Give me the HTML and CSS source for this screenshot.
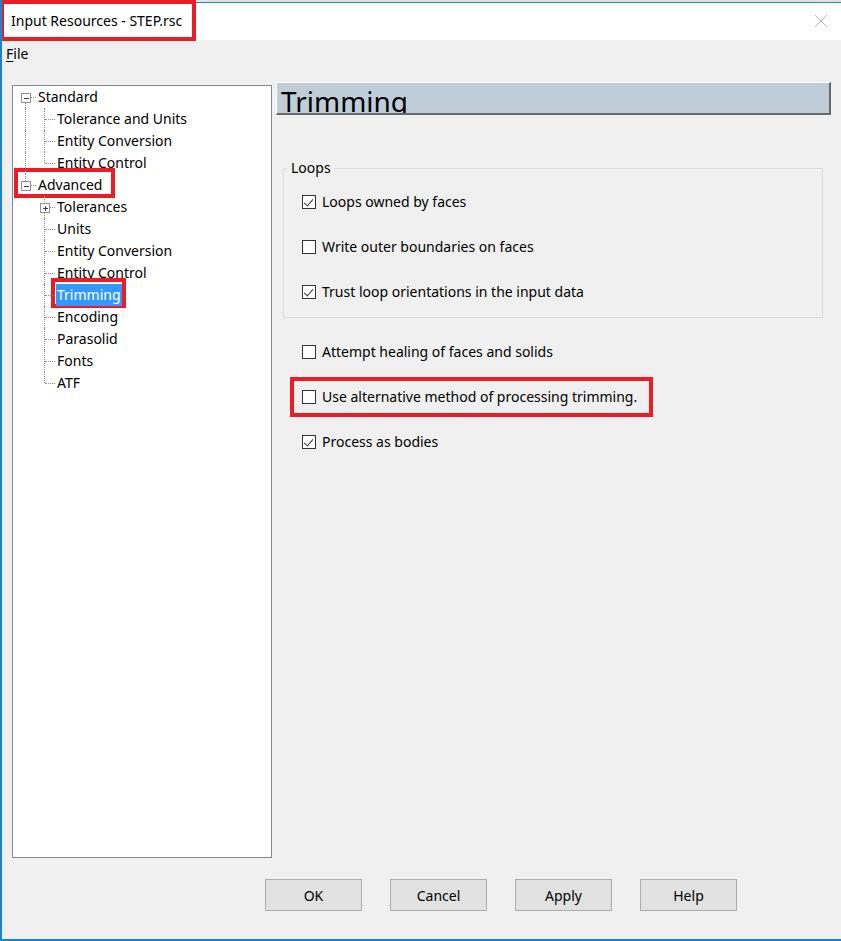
FILE: index.html
```html
<!DOCTYPE html>
<html>
<head>
<meta charset="utf-8">
<link rel="stylesheet" href="styles.css">
</head>
<body>
<div class="window">
  <div class="titlebar">
    <span class="title">Input Resources - STEP.rsc</span>
    <svg class="close" width="14" height="14" viewBox="0 0 14 14"><path d="M1 1 L13 13 M13 1 L1 13" stroke="#b4b4b4" stroke-width="1" fill="none"/></svg>
  </div>
  <div class="menubar"><span class="menu-item"><u>F</u>ile</span></div>
  <div class="main">
    <div class="tree">
      <div class="row">
        <span class="cell root-first"><span class="exp minus"></span></span>
        <span class="label">Standard</span>
      </div>
      <div class="row"><span class="cell vline"></span><span class="cell tee"></span><span class="label">Tolerance and Units</span></div>
      <div class="row"><span class="cell vline"></span><span class="cell tee"></span><span class="label">Entity Conversion</span></div>
      <div class="row"><span class="cell vline"></span><span class="cell ell"></span><span class="label">Entity Control</span></div>
      <div class="row">
        <span class="adv-box">
          <span class="cell root-last"><span class="exp minus"></span></span>
          <span class="label">Advanced</span>
        </span>
      </div>
      <div class="row"><span class="cell"></span><span class="cell tee"><span class="exp plus"></span></span><span class="label">Tolerances</span></div>
      <div class="row"><span class="cell"></span><span class="cell tee"></span><span class="label">Units</span></div>
      <div class="row"><span class="cell"></span><span class="cell tee"></span><span class="label">Entity Conversion</span></div>
      <div class="row"><span class="cell"></span><span class="cell tee"></span><span class="label">Entity Control</span></div>
      <div class="row"><span class="cell"></span><span class="cell tee"></span><span class="sel-box"><span class="label selected">Trimming</span></span></div>
      <div class="row"><span class="cell"></span><span class="cell tee"></span><span class="label">Encoding</span></div>
      <div class="row"><span class="cell"></span><span class="cell tee"></span><span class="label">Parasolid</span></div>
      <div class="row"><span class="cell"></span><span class="cell tee"></span><span class="label">Fonts</span></div>
      <div class="row"><span class="cell"></span><span class="cell ell"></span><span class="label">ATF</span></div>
    </div>
    <div class="panel">
      <div class="heading">Trimming</div>
      <div class="group">
        <div class="group-label">Loops</div>
        <div class="check-row"><span class="check"><span class="box checked"></span>Loops owned by faces</span></div>
        <div class="check-row"><span class="check"><span class="box"></span>Write outer boundaries on faces</span></div>
        <div class="check-row"><span class="check"><span class="box checked"></span>Trust loop orientations in the input data</span></div>
      </div>
      <div class="options">
        <div class="check-row"><span class="check"><span class="box"></span>Attempt healing of faces and solids</span></div>
        <div class="check-row"><span class="check highlight"><span class="box"></span>Use alternative method of processing trimming.</span></div>
        <div class="check-row"><span class="check"><span class="box checked"></span>Process as bodies</span></div>
      </div>
    </div>
  </div>
  <div class="buttons">
    <button class="btn">OK</button>
    <button class="btn">Cancel</button>
    <button class="btn">Apply</button>
    <button class="btn">Help</button>
  </div>
</div>
</body>
</html>
```
FILE: styles.css
```css
* { box-sizing: border-box; }
html, body { margin: 0; padding: 0; }
body {
  font-family: "Noto Sans", "Open Sans", sans-serif;
  font-size: 14px;
  color: #000;
  background: #f0f0f0;
}
.window {
  width: 841px;
  height: 941px;
  background: #f0f0f0;
  border-left: 2px solid #1883d7;
  border-bottom: 2px solid #1883d7;
  display: flex;
  flex-direction: column;
  overflow: hidden;
}
.titlebar {
  height: 41px;
  flex: none;
  display: flex;
  align-items: flex-start;
  justify-content: space-between;
  background: linear-gradient(#e4e4e4 0 2px, #1883d7 2px 3px, #ffffff 3px 40px, #f0f0f0 40px);
}
.title {
  margin-left: -2px;
  height: 41px;
  border: 4px solid #ed1c24;
  background: #fff;
  padding: 0 10px 0 7px;
  display: flex;
  align-items: center;
  font-size: 14px;
  color: #000;
}
.close { margin: 14px 13px 0 0; }
.menubar {
  height: 25px;
  flex: none;
  display: flex;
  align-items: center;
  padding-left: 4px;
}
.menu-item { font-size: 14px; }
.menu-item u { text-decoration-thickness: 1px; text-underline-offset: 2px; }
.main {
  flex: none;
  height: 792px;
  display: flex;
  padding-left: 10px;
  gap: 4px;
}
.tree {
  margin-top: 19px;
  width: 260px;
  height: 773px;
  background: #fff;
  border: 1px solid #828790;
  padding-left: 3px;
}
.row {
  height: 22px;
  display: flex;
  align-items: stretch;
}
.cell {
  width: 19px;
  height: 22px;
  flex: none;
  position: relative;
}
.cell.vline::before,
.cell.tee::before,
.cell.ell::before,
.cell.root-first::before,
.cell.root-last::before {
  content: "";
  position: absolute;
  left: 9px;
  border-left: 1px dotted #8c8c8c;
}
.cell.vline::before, .cell.tee::before { top: 0; bottom: 0; }
.cell.ell::before, .cell.root-last::before { top: 0; height: 11px; }
.cell.root-first::before { top: 11px; bottom: 0; }
.cell.tee::after, .cell.ell::after, .cell.root-first::after, .cell.root-last::after {
  content: "";
  position: absolute;
  left: 10px;
  right: -1px;
  top: 11px;
  border-top: 1px dotted #8c8c8c;
}
.exp {
  position: absolute;
  left: 5px;
  top: 7px;
  width: 10px;
  height: 10px;
  border: 1px solid #919191;
  background: #fff;
  z-index: 1;
}
.exp::before {
  content: "";
  position: absolute;
  left: 2px;
  top: 4px;
  width: 5px;
  height: 1px;
  background: #2c3e66;
}
.exp.plus::after {
  content: "";
  position: absolute;
  left: 4px;
  top: 2px;
  width: 1px;
  height: 5px;
  background: #2c3e66;
}
.label {
  margin-left: 2px;
  padding: 0 1px;
  line-height: 22px;
  height: 22px;
  white-space: nowrap;
}
.adv-box {
  display: flex;
  align-items: flex-start;
  margin-left: -2px;
  margin-top: -6px;
  height: 30px;
  border: 4px solid #ed1c24;
  padding: 2px 8px 0 0;
}
.adv-box .cell { margin-left: -2px; }
.sel-box {
  display: flex;
  align-items: flex-start;
  margin-left: -3px;
  margin-top: -6px;
  height: 30px;
  border: 4px solid #ed1c24;
  padding: 2px 0 0 1px;
}
.sel-box .label { margin-left: 0; }
.label.selected {
  background: #3399ff;
  color: #fff;
}
.panel {
  margin-top: 16px;
  width: 555px;
  display: flex;
  flex-direction: column;
}
.heading {
  height: 33px;
  background: #bfcdd9;
  border-top: 1px solid #fff;
  border-left: 1px solid #fff;
  border-right: 2px solid #696969;
  border-bottom: 2px solid #696969;
  font-size: 28px;
  line-height: 37px;
  padding-left: 4px;
  overflow: hidden;
}
.group {
  margin: 53px 8px 0 7px;
  height: 150px;
  border: 1px solid #dcdcdc;
  padding: 0 0 0 18px;
  display: flex;
  flex-direction: column;
}
.group-label {
  margin: -11px 0 0 -15px;
  align-self: flex-start;
  background: #f0f0f0;
  padding: 0 3px 0 4px;
  line-height: 20px;
  height: 21px;
}
.check-row {
  height: 45px;
  display: flex;
  align-items: center;
  flex: none;
}
.check {
  display: inline-flex;
  align-items: center;
  white-space: nowrap;
}
.box {
  width: 14px;
  height: 14px;
  border: 1px solid #333;
  background: #fff;
  margin-right: 6px;
  position: relative;
  flex: none;
}
.box.checked::after {
  content: "";
  position: absolute;
  left: 3px;
  top: 1px;
  width: 4px;
  height: 8px;
  border-right: 1px solid #333;
  border-bottom: 1px solid #333;
  transform: rotate(40deg);
}
.options {
  margin-top: 11px;
  padding-left: 26px;
  display: flex;
  flex-direction: column;
}
.check.highlight {
  margin-left: -12px;
  height: 40px;
  border: 4px solid #ed1c24;
  padding: 0 12px 0 8px;
}
.buttons {
  flex: none;
  display: flex;
  justify-content: flex-end;
  gap: 28px;
  padding: 21px 104px 0 0;
}
.btn {
  width: 97px;
  height: 32px;
  background: #e1e1e1;
  border: 1px solid #adadad;
  font-family: inherit;
  font-size: 14px;
  color: #000;
  padding: 0;
}
```
